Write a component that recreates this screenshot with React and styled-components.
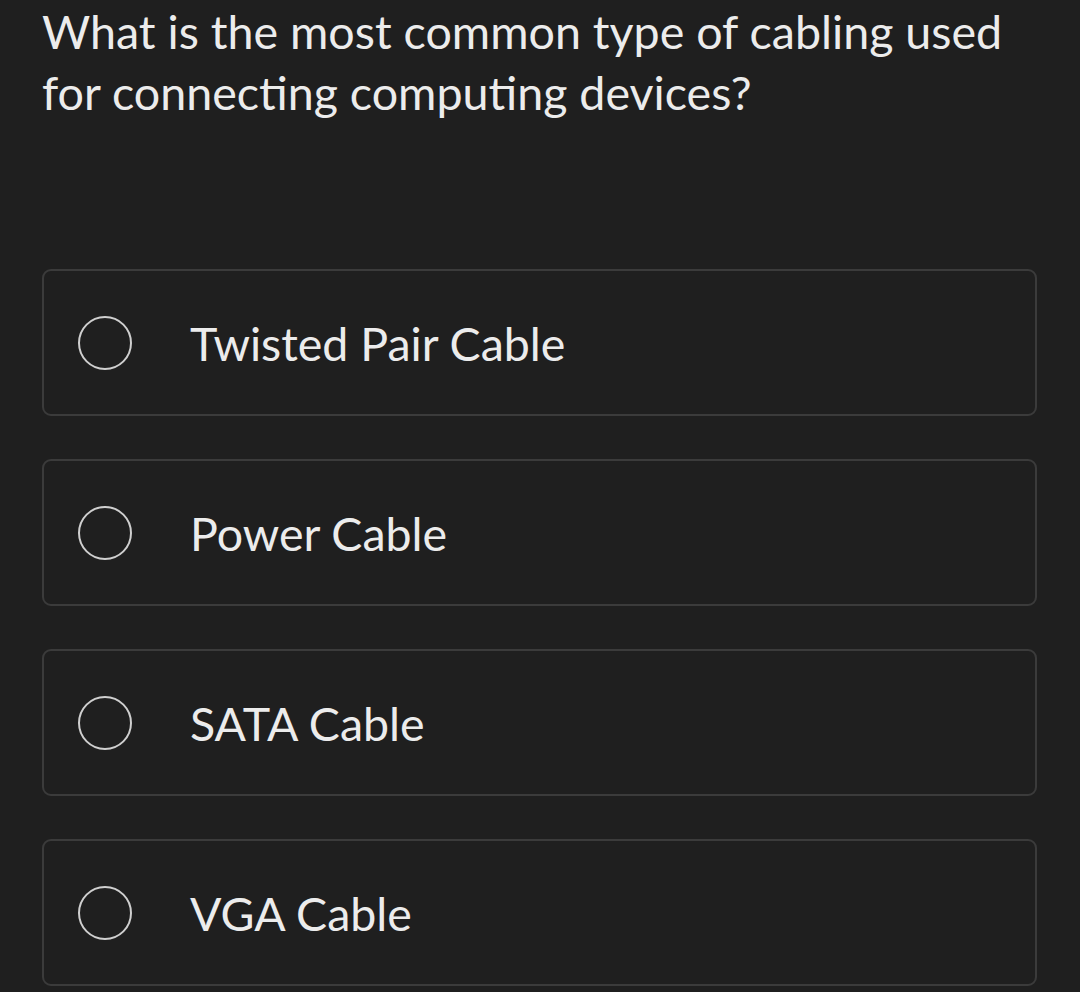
import styled, { createGlobalStyle } from "styled-components";

const GlobalStyle = createGlobalStyle`
  html, body {
    margin: 0;
    padding: 0;
    background: #1f1f1f;
  }
  body {
    font-family: Lato, "Noto Sans", sans-serif;
    color: #ececec;
  }
`;

const options = ["Twisted Pair Cable", "Power Cable", "SATA Cable", "VGA Cable"];

const App = () => {
  return <>
    <GlobalStyle />
    <Page>
      <Question>What is the most common type of cabling used for connecting computing devices?</Question>
      <OptionList>
        {options.map((text) => (
          <Option key={text}>
            <Radio />
            <OptionText>{text}</OptionText>
          </Option>
        ))}
      </OptionList>
    </Page>
  </>
};

const Page = styled.div`
  width: 1080px;
  min-height: 992px;
  box-sizing: border-box;
  padding: 0 43px 0 42px;
  background: #1f1f1f;
  overflow: hidden;
`

const Question = styled.h1`
  margin: 0;
  padding-top: 1px;
  font-size: 46.6px;
  font-weight: 400;
  line-height: 61px;
  color: #ececec;
`

const OptionList = styled.div`
  display: flex;
  flex-direction: column;
  gap: 43px;
  margin-top: 146px;
`

const Option = styled.label`
  display: flex;
  align-items: center;
  height: 147px;
  box-sizing: border-box;
  border: 2px solid #3b3b3b;
  border-radius: 9px;
  padding-left: 34px;
  cursor: pointer;
`

const Radio = styled.span`
  width: 54px;
  height: 54px;
  box-sizing: border-box;
  border: 2px solid #cfcfcf;
  border-radius: 50%;
  flex-shrink: 0;
`

const OptionText = styled.span`
  margin-left: 58px;
  font-size: 46.5px;
  color: #ececec;
`

export default App;
